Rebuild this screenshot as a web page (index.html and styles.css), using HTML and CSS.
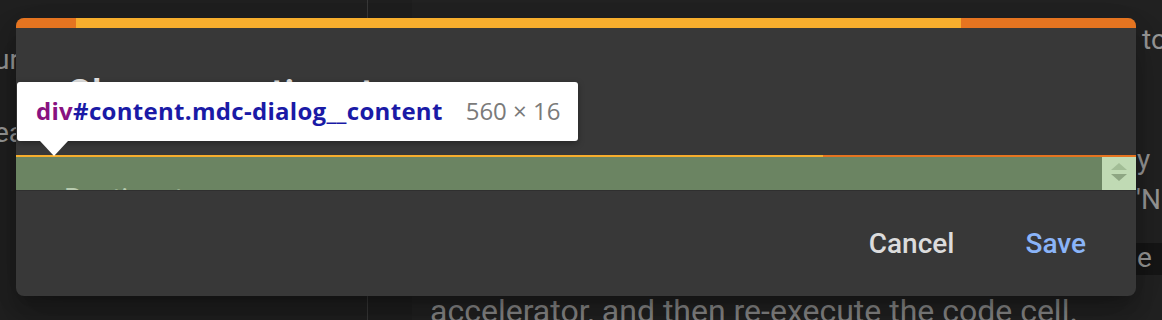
FILE: index.html
```html
<!DOCTYPE html>
<html lang="en">
<head>
<meta charset="utf-8">
<title>Change runtime type</title>
<link rel="stylesheet" href="styles.css">
</head>
<body>
<div class="page">
  <aside class="sidebar">
    <div class="side-line side-line-1">ur</div>
    <div class="side-line side-line-2">ea</div>
  </aside>
  <div class="vrule"></div>
  <div class="gutter"></div>
  <main class="main">
    <div class="main-body">
      <p class="para">accelerator, and then re-execute the code cell.</p>
    </div>
    <div class="edge">
      <div class="edge-line edge-to">to</div>
      <div class="edge-line edge-y">y</div>
      <div class="edge-line edge-n">'N</div>
      <div class="edge-code">e</div>
    </div>
  </main>
</div>

<div class="dialog">
  <div class="dialog-bar"></div>
  <div class="dialog-header">
    <h2 class="dialog-title">Change runtime type</h2>
  </div>
  <div class="dialog-rule"></div>
  <div class="dialog-content">
    <div class="content-text">Runtime type</div>
    <div class="scroll-btns">
      <span class="tri tri-up"></span>
      <span class="tri tri-down"></span>
    </div>
  </div>
  <div class="dialog-sep"></div>
  <div class="dialog-actions">
    <button class="btn btn-cancel">Cancel</button>
    <button class="btn btn-save">Save</button>
  </div>
</div>

<div class="inspect-tip">
  <span class="tip-sel"><span class="tip-tag">div</span>#content.mdc-dialog__content</span>
  <span class="tip-size">560 × 16</span>
</div>
</body>
</html>
```

FILE: styles.css
```css
* { box-sizing: border-box; }

html, body {
  margin: 0;
  padding: 0;
}

body {
  width: 1162px;
  height: 320px;
  overflow: hidden;
  background: #212121;
  font-family: Roboto, "Liberation Sans", sans-serif;
  position: relative;
}

.page {
  display: flex;
  height: 320px;
}

.sidebar {
  width: 367px;
  background: #202020;
  display: flex;
  flex-direction: column;
  overflow: hidden;
}

.side-line {
  font-size: 28px;
  line-height: 40px;
  color: #9b9b9b;
  text-indent: -6px;
  white-space: nowrap;
}
.side-line-1 { margin-top: 40px; }
.side-line-2 { margin-top: 33px; }

.vrule {
  width: 1px;
  background: #3a3a3a;
}

.gutter {
  width: 44px;
  background: #1f1f1f;
}

.main {
  flex: 1;
  display: flex;
  background: #222222;
  overflow: hidden;
}

.main-body {
  flex: 1;
  display: flex;
  flex-direction: column;
  justify-content: flex-end;
  padding-left: 18px;
}

.para {
  margin: 0 0 -11px;
  font-size: 32px;
  line-height: 40px;
  letter-spacing: 0;
  color: #8c8c8c;
  white-space: nowrap;
}

.edge {
  width: 26px;
  display: flex;
  flex-direction: column;
  font-size: 28px;
  line-height: 40px;
  color: #9b9b9b;
  white-space: nowrap;
}
.edge-line { height: 40px; }
.edge-to { margin-top: 20px; padding-left: 6px; }
.edge-y { margin-top: 80px; padding-left: 1px; }
.edge-n { padding-left: 0; }
.edge-code {
  margin-top: 23px;
  height: 32px;
  line-height: 30px;
  background: #161616;
  padding-left: 1px;
}

/* dialog overlay */
.dialog {
  position: absolute;
  left: 16px;
  top: 18px;
  width: 1120px;
  height: 278px;
  background: #383838;
  border-radius: 8px;
  overflow: hidden;
  display: flex;
  flex-direction: column;
  box-shadow: 0 11px 15px -7px rgba(0,0,0,.25), 0 24px 38px 3px rgba(0,0,0,.16), 0 9px 46px 8px rgba(0,0,0,.14);
}

.dialog-bar {
  height: 10px;
  flex: none;
  background: linear-gradient(to right, #e57420 0, #e57420 60px, #f7ae2d 60px, #f7ae2d 945px, #e57420 945px);
}

.dialog-header {
  height: 127px;
  flex: none;
  padding: 43px 0 0 50px;
}

.dialog-title {
  margin: 0;
  font-size: 40px;
  line-height: 48px;
  font-weight: 500;
  color: #e3e3e3;
  white-space: nowrap;
}

.dialog-rule {
  height: 2px;
  flex: none;
  background: linear-gradient(to right, #f7ae2d 0, #f7ae2d 807px, #e57420 807px);
}

.dialog-content {
  height: 33px;
  flex: none;
  display: flex;
  background: #6b8462;
}

.content-text {
  flex: 1;
  overflow: hidden;
  padding: 22px 0 0 48px;
  font-size: 28px;
  line-height: 40px;
  color: #b8cbaf;
  white-space: nowrap;
}

.scroll-btns {
  width: 34px;
  background: #c0dab4;
  display: flex;
  flex-direction: column;
  align-items: center;
  padding-top: 6px;
  gap: 4px;
}

.tri {
  width: 0;
  height: 0;
  border-left: 8px solid transparent;
  border-right: 8px solid transparent;
}
.tri-up { border-bottom: 7px solid #a2bd96; }
.tri-down { border-top: 7px solid #8ea683; }

.dialog-sep {
  height: 1px;
  flex: none;
  background: #2f2f2f;
}

.dialog-actions {
  flex: 1;
  display: flex;
  justify-content: flex-end;
  align-items: flex-start;
  padding: 33px 50px 0 0;
  gap: 71px;
}

.btn {
  background: none;
  border: 0;
  padding: 0;
  margin: 0;
  font-family: Roboto, "Liberation Sans", sans-serif;
  font-size: 28px;
  line-height: 40px;
  font-weight: 500;
}
.btn-cancel { color: #dcdcdc; }
.btn-save { color: #8ab4f8; }

/* devtools inspect tooltip overlay */
.inspect-tip {
  position: absolute;
  left: 17px;
  top: 82px;
  width: 561px;
  height: 59px;
  background: #ffffff;
  border-radius: 3px;
  display: flex;
  align-items: center;
  padding: 0 18px 2px 19px;
  gap: 23px;
  font-family: "Open Sans", "Noto Sans", sans-serif;
  font-size: 24px;
  white-space: nowrap;
  box-shadow: 0 2px 6px rgba(0,0,0,.35);
}

.inspect-tip::after {
  content: "";
  position: absolute;
  left: 23px;
  top: 59px;
  width: 0;
  height: 0;
  border-left: 14px solid transparent;
  border-right: 14px solid transparent;
  border-top: 15px solid #ffffff;
}

.tip-sel {
  font-weight: 700;
  letter-spacing: 0.3px;
  color: #1a1aa6;
}
.tip-tag { color: #881280; }
.tip-size {
  color: #7a7a7a;
  font-weight: 400;
}
```
